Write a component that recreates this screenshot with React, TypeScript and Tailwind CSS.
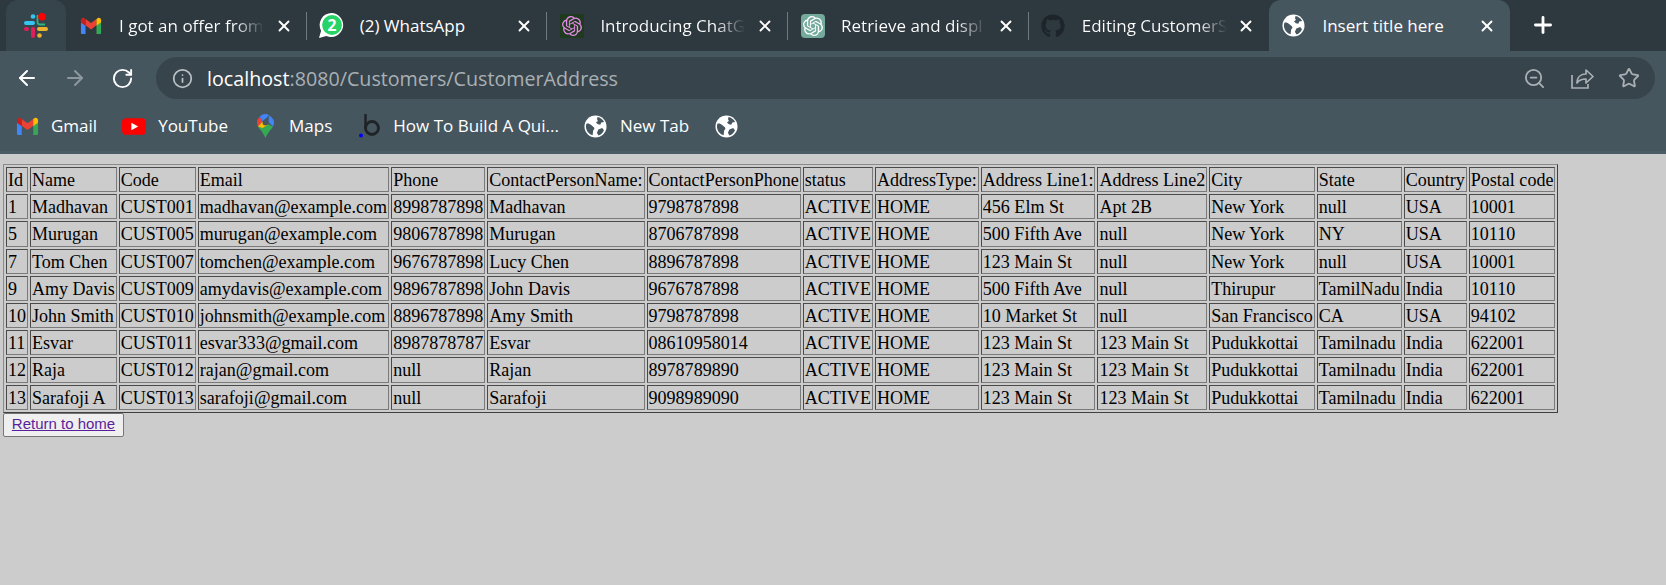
import React from "react";
import { Info, Plus, RotateCw, ArrowLeft, ArrowRight, X, Star, ZoomOut } from "lucide-react";
import { FaGithub } from "react-icons/fa";
import { SiOpenai } from "react-icons/si";

const Globe = ({ size = 23 }: { size?: number }) => (
  <svg width={size} height={size} viewBox="0 0 24 24" className="shrink-0">
    <circle cx="12" cy="12" r="11.500" fill="#fff" />
    <path
      d="M2.500 9c2-.5 3.500 0 5 1.500l3 2.500c.5 1 .5 2-.5 2.500l-.5 1-.5 4.500C5.500 20.500 2 16.500 2 12c0-1 .2-2 .5-3zM14 2.200c3 .5 5.500 2.500 7 5l-3 .5-1 2.500-2.500-.5-2-2 2-1.500-1-2c.5-.5.500-1.500.500-2z"
      fill="#46565f"
    />
    <path d="M15 15l4-1.500 1.800 2.500c-1 2.500-3 4.500-5.800 5.500l-1.500-3z" fill="#46565f" />
  </svg>
);

const Gmail = ({ size = 22 }: { size?: number }) => (
  <svg width={size} height={size * 0.8} viewBox="0 0 24 19" className="shrink-0">
    <path d="M1 6v11c0 1 .7 2 2 2h3V9z" fill="#4285f4" />
    <path d="M18 9v10h3c1.300 0 2-1 2-2V6z" fill="#34a853" />
    <path d="M6 9l6 4.500L18 9V2l-6 4.500L6 2z" fill="#ea4335" />
    <path d="M1 3.500V6l5 3.500V2L4.500 1C3 0 1 1 1 3.500z" fill="#c5221f" />
    <path d="M23 3.500V6l-5 3.500V2l1.500-1C21 0 23 1 23 3.500z" fill="#fbbc04" />
  </svg>
);

const Slack = () => (
  <svg width="24" height="26" viewBox="0 0 24 26" className="shrink-0">
    <rect x="0" y="8" width="11" height="4" rx="2" fill="#36c5f0" />
    <circle cx="9" cy="3.500" r="2.300" fill="#36c5f0" />
    <path d="M13.500 2v7c0 1.500 1 2.500 2.500 2.500h5" fill="none" stroke="#2eb67d" strokeWidth="1.800" />
    <circle cx="18" cy="3.800" r="3.800" fill="#ff0000" />
    <rect x="13" y="14" width="11" height="4" rx="2" fill="#ecb22e" />
    <circle cx="15.500" cy="22.500" r="2.300" fill="#ecb22e" />
    <rect x="0" y="14" width="5" height="4" rx="2" fill="#e01e5a" />
    <rect x="7" y="14" width="4" height="11" rx="2" fill="#e01e5a" />
  </svg>
);

const WhatsApp = () => (
  <svg width="25" height="25" viewBox="0 0 24 24" className="shrink-0">
    <path d="M12 0a11.500 11.500 0 0 0-10 17L0 24l7-2a11.500 11.500 0 1 0 5-22z" fill="#fff" />
    <circle cx="12.500" cy="11.500" r="9.500" fill="#25d366" />
    <text x="12.500" y="17" textAnchor="middle" fontSize="15" fontWeight="700" fill="#fff" fontFamily="'Open Sans', sans-serif">
      2
    </text>
  </svg>
);

const Maps = () => (
  <svg width="17" height="24" viewBox="0 0 17 24" className="shrink-0">
    <path d="M8.500 0C6 0 4 1 2.500 3l3 4.500L12 1.500C11 .5 10 0 8.500 0z" fill="#4285f4" />
    <path d="M0 8.500c0 1.500.5 3 1 4l4.500-5L2.500 3C1 4 0 6 0 8.500z" fill="#ea4335" />
    <path d="M1 12.500C3 16 6 18 8.500 24 11 18 14 16 16 12.500L8.500 9z" fill="#34a853" />
    <path d="M1 12.500l4.500-5 6 3-6 3.500z" fill="#fbbc04" />
    <path d="M12 1.500C15 3 17 5.500 17 8.500c0 1.500-.5 3-1 4l-4.500-4.500z" fill="#4285f4" />
    <circle cx="8.500" cy="8.500" r="3" fill="#46565f" />
  </svg>
);

const Youtube = () => (
  <svg width="24" height="17" viewBox="0 0 23 16" className="shrink-0">
    <rect width="23" height="16" rx="4" fill="#ff0000" />
    <path d="M9 4.500l6.500 3.500L9 11.500z" fill="#fff" />
  </svg>
);

const Bubble = () => (
  <svg width="23" height="26" viewBox="0 0 22 26" className="shrink-0">
    <path d="M7 1v15" stroke="#1f2328" strokeWidth="2.500" />
    <circle cx="13.500" cy="15" r="6.500" fill="none" stroke="#1f2328" strokeWidth="2.800" />
    <circle cx="2.500" cy="22.500" r="2" fill="#0000ff" />
  </svg>
);

const ShareIcon = () => (
  <svg width="24" height="24" viewBox="0 0 24 24" fill="none" stroke="#a9b0b4" strokeWidth="1.700">
    <path d="M2 9v13h16v-4" />
    <path d="M7 17c0-6 4-9 9-9V4l7 6.500-7 6.500v-4c-4 0-7 1-9 4z" strokeLinejoin="round" />
  </svg>
);

const Tab = ({ icon, title, active, fade, sep = true }: { icon: React.ReactNode; title: string; active?: boolean; fade?: boolean; sep?: boolean }) => (
  <div className={`relative flex h-[51px] w-[240.700px] items-center pl-[12px] pr-[14px] ${active ? "rounded-t-[12px] bg-[#46565f]" : ""}`}>
    <div className="flex w-[25px] shrink-0 justify-center">{icon}</div>
    <div className="ml-[16px] w-[145px] overflow-hidden whitespace-nowrap text-[17px] text-white">
      <span className={fade ? "block bg-gradient-to-r from-white from-80% to-transparent bg-clip-text text-transparent" : ""}>{title}</span>
    </div>
    <X className="ml-auto shrink-0 text-white" size={18} strokeWidth={2.500} />
    {sep && <div className="absolute right-0 top-[12px] h-[28px] w-px bg-[#6e7a80]" />}
  </div>
);

const Bookmark = ({ icon, label }: { icon: React.ReactNode; label?: string }) => (
  <div className="flex items-center gap-[12px] px-[12.500px] text-[17px] text-white">
    <div className="flex w-[24px] justify-center">{icon}</div>
    {label && <span>{label}</span>}
  </div>
);

const columns = ["Id", "Name", "Code", "Email", "Phone", "ContactPersonName:", "ContactPersonPhone", "status", "AddressType:", "Address Line1:", "Address Line2", "City", "State", "Country", "Postal code"];

const rows = [
  ["1", "Madhavan", "CUST001", "madhavan@example.com", "8998787898", "Madhavan", "9798787898", "ACTIVE", "HOME", "456 Elm St", "Apt 2B", "New York", "null", "USA", "10001"],
  ["5", "Murugan", "CUST005", "murugan@example.com", "9806787898", "Murugan", "8706787898", "ACTIVE", "HOME", "500 Fifth Ave", "null", "New York", "NY", "USA", "10110"],
  ["7", "Tom Chen", "CUST007", "tomchen@example.com", "9676787898", "Lucy Chen", "8896787898", "ACTIVE", "HOME", "123 Main St", "null", "New York", "null", "USA", "10001"],
  ["9", "Amy Davis", "CUST009", "amydavis@example.com", "9896787898", "John Davis", "9676787898", "ACTIVE", "HOME", "500 Fifth Ave", "null", "Thirupur", "TamilNadu", "India", "10110"],
  ["10", "John Smith", "CUST010", "johnsmith@example.com", "8896787898", "Amy Smith", "9798787898", "ACTIVE", "HOME", "10 Market St", "null", "San Francisco", "CA", "USA", "94102"],
  ["11", "Esvar", "CUST011", "esvar333@gmail.com", "8987878787", "Esvar", "08610958014", "ACTIVE", "HOME", "123 Main St", "123 Main St", "Pudukkottai", "Tamilnadu", "India", "622001"],
  ["12", "Raja", "CUST012", "rajan@gmail.com", "null", "Rajan", "8978789890", "ACTIVE", "HOME", "123 Main St", "123 Main St", "Pudukkottai", "Tamilnadu", "India", "622001"],
  ["13", "Sarafoji A", "CUST013", "sarafoji@gmail.com", "null", "Sarafoji", "9098989090", "ACTIVE", "HOME", "123 Main St", "123 Main St", "Pudukkottai", "Tamilnadu", "India", "622001"],
];

const cellClass = "whitespace-nowrap border border-t-[#4a4a4a] border-l-[#4a4a4a] border-b-[#7a7a7a] border-r-[#7a7a7a] px-px pt-[2px] pb-0 leading-[21.200px]";

const App = () => {
  return (
    <div className="flex h-[585px] w-[1666px] flex-col overflow-hidden bg-[#cccccc] font-['Open_Sans','Noto_Sans',sans-serif]">
      <div className="flex h-[51px] items-start bg-[#2e383f]">
        <div className="ml-[6px] flex h-[51px] w-[60px] shrink-0 items-center justify-center rounded-t-[12px] bg-[#36444b]">
          <Slack />
        </div>
        <Tab icon={<Gmail />} title="I got an offer from" fade />
        <Tab icon={<WhatsApp />} title="(2) WhatsApp" />
        <Tab icon={<div className="flex h-[24px] w-[24px] items-center justify-center bg-[#1f3a1e]"><SiOpenai className="text-[#e48be8]" size={20} /></div>} title="Introducing ChatG" fade />
        <Tab icon={<div className="flex h-[24px] w-[24px] items-center justify-center rounded-[4px] bg-[#74aa9c]"><SiOpenai className="text-white" size={20} /></div>} title="Retrieve and displ" fade />
        <Tab icon={<FaGithub className="text-[#1d252b]" size={24} />} title="Editing CustomerS" fade sep={false} />
        <Tab icon={<Globe />} title="Insert title here" active sep={false} />
        <Plus className="ml-[20px] mt-[12px] text-white" size={26} strokeWidth={2.600} />
      </div>

      <div className="flex h-[103px] flex-col border-b-[3px] border-[#4c5c64] bg-[#46565f]">
        <div className="mt-[6px] flex items-center">
          <div className="flex w-[156px] items-center gap-[24px] pl-[15px]">
            <ArrowLeft className="text-white" size={24} strokeWidth={2} />
            <ArrowRight className="text-[#8d989e]" size={24} strokeWidth={2} />
            <RotateCw className="text-white" size={23} strokeWidth={2} />
          </div>
          <div className="flex h-[42px] w-[1499px] items-center rounded-full bg-[#38444c] pl-[16px] pr-[15px]">
            <Info className="text-[#b9c0c4]" size={21} strokeWidth={2} />
            <div className="ml-[14px] pt-[2px] text-[19.700px]">
              <span className="text-white">localhost</span>
              <span className="text-[#a9b0b4]">:8080/Customers/CustomerAddress</span>
            </div>
            <div className="ml-auto flex items-center gap-[24px]">
              <ZoomOut className="text-[#a9b0b4]" size={23} strokeWidth={1.900} />
              <ShareIcon />
              <Star className="text-[#a9b0b4]" size={22} strokeWidth={2} />
            </div>
          </div>
        </div>
        <div className="mt-[9px] flex h-[36px] items-center pl-[2.500px]">
          <Bookmark icon={<Gmail size={23} />} label="Gmail" />
          <Bookmark icon={<Youtube />} label="YouTube" />
          <Bookmark icon={<Maps />} label="Maps" />
          <Bookmark icon={<Bubble />} label="How To Build A Qui..." />
          <Bookmark icon={<Globe />} label="New Tab" />
          <Bookmark icon={<Globe />} />
        </div>
      </div>

      <div className="px-[3px] pt-[10px] font-['Liberation_Serif',serif] text-[18.040px] text-black">
        <table className="border-separate border-spacing-[2px] border border-t-[#8a8a8a] border-l-[#8a8a8a] border-b-[#404040] border-r-[#404040]">
          <tbody>
            <tr>
              {columns.map((col) => (
                <td key={col} className={cellClass}>{col}</td>
              ))}
            </tr>
            {rows.map((row) => (
              <tr key={row[0]}>
                {row.map((cell, index) => (
                  <td key={index} className={cellClass}>{cell}</td>
                ))}
              </tr>
            ))}
          </tbody>
        </table>
        <button className="block h-[24px] w-[121px] rounded-[2px] border border-[#767676] bg-[#efefef] pb-[2px] font-['Liberation_Sans',sans-serif] text-[15px] leading-[20px] text-[#5a1f9a] underline">
          Return to home
        </button>
      </div>
    </div>
  );
};

export default App;
